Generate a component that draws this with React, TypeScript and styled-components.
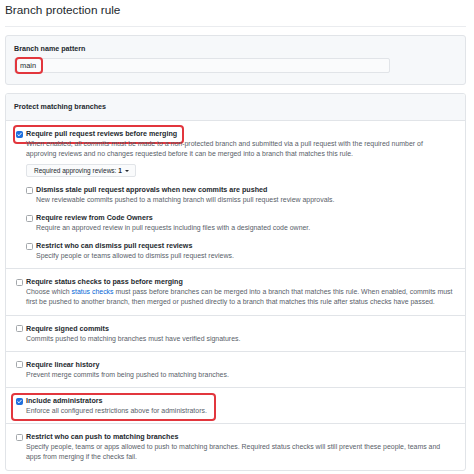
import React from "react";
import styled, { createGlobalStyle } from "styled-components";

const GlobalStyle = createGlobalStyle`
    body {
        margin: 0;
        background: #ffffff;
        font-family: "Liberation Sans", Arial, sans-serif;
        color: #24292e;
    }
`;

const Page = styled.div`
    padding: 0 8px 6px 5px;
`;

const Title = styled.h1`
    margin: 0;
    padding: 3px 0 9px;
    font-size: 11.8px;
    line-height: 14px;
    font-weight: 400;
    color: #24292e;
    border-bottom: 1px solid #eaecef;
`;

const Box = styled.div<{ $muted?: boolean }>`
    margin-top: 8px;
    border: 1px solid #e1e4e8;
    border-radius: 3px;
    background: ${props => (props.$muted ? "#f6f8fa" : "#ffffff")};
    overflow: hidden;
`;

const PatternBody = styled.div`
    padding: 8px 9px 11px 8px;
`;

const FieldLabel = styled.div`
    font-size: 7.15px;
    line-height: 10px;
    font-weight: 700;
`;

const FakeInput = styled.div`
    margin-top: 4px;
    width: 376px;
    height: 15px;
    box-sizing: border-box;
    border: 1px solid #e1e4e8;
    border-radius: 2px;
    background: #fafbfc;
    display: flex;
    align-items: stretch;
    padding: 0 0 0 5px;
    font-size: 7.4px;
    color: #24292e;
`;

const BoxHeader = styled.div`
    background: #f6f8fa;
    padding: 8px 8px;
    border-bottom: 1px solid #e1e4e8;
    font-size: 7.15px;
    line-height: 10px;
    font-weight: 700;
`;

const Section = styled.div`
    padding: 8px 4px 7.3px 10px;

    & + & {
        border-top: 1px solid #e1e4e8;
    }
`;

const Highlight = styled.div<{ $pad: string }>`
    display: flow-root;
    width: fit-content;
    padding: ${props => props.$pad};
    margin: ${props =>
        props.$pad
            .split(" ")
            .map(v => `-${v}`)
            .join(" ")};
    border-radius: 2px;
    box-shadow: 0 0 0 2px #e2363d;
`;

const InputHighlight = styled(Highlight)`
    display: flex;
    align-items: center;
`;

const OptionHead = styled.div`
    display: flex;
    align-items: center;
    gap: 3px;
`;

const Box7 = styled.span<{ $checked?: boolean }>`
    flex: none;
    width: 7px;
    height: 7px;
    box-sizing: border-box;
    border-radius: 1.5px;
    border: 1px solid ${props => (props.$checked ? "#1f6fde" : "#a3a7ab")};
    background: ${props => (props.$checked ? "#1f6fde" : "#ffffff")};
    display: flex;
    align-items: center;
    justify-content: center;
`;

const Label = styled.span`
    font-size: 7.15px;
    line-height: 10px;
    font-weight: 700;
    color: #24292e;
`;

const Desc = styled.div`
    padding-left: 10px;
    font-size: 6.95px;
    line-height: 10px;
    color: #586069;
`;

const Link = styled.span`
    color: #0366d6;
`;

const Dropdown = styled.div`
    margin: 3px 0 0 10px;
    display: inline-flex;
    align-items: center;
    gap: 3px;
    height: 13px;
    box-sizing: border-box;
    padding: 0 6px 0 7px;
    border: 1px solid #e1e4e8;
    border-radius: 2px;
    background: #fafbfc;
    font-size: 6.5px;
    color: #24292e;
    b {
        font-weight: 700;
    }
`;

const Caret = styled.span`
    width: 0;
    height: 0;
    border-left: 2px solid transparent;
    border-right: 2px solid transparent;
    border-top: 2.5px solid #24292e;
`;

const SubOption = styled.div`
    margin: 8px 0 0 10px;
`;

const Checkbox: React.FC<{ checked?: boolean }> = ({ checked }) => (
    <Box7 $checked={checked}>
        {checked && (
            <svg width="5" height="5" viewBox="0 0 10 10">
                <path d="M1.5 5.2 L4 7.6 L8.6 2.4" fill="none" stroke="#fff" strokeWidth="1.9" strokeLinecap="round" strokeLinejoin="round" />
            </svg>
        )}
    </Box7>
);

interface OptionProps {
    label: string;
    checked?: boolean;
    children?: React.ReactNode;
}

const Head: React.FC<{ label: string; checked?: boolean }> = ({ label, checked }) => (
    <OptionHead>
        <Checkbox checked={checked} />
        <Label>{label}</Label>
    </OptionHead>
);

const Option: React.FC<OptionProps> = ({ label, checked, children }) => (
    <>
        <Head label={label} checked={checked} />
        <Desc>{children}</Desc>
    </>
);

export default function App() {
    return (
        <Page>
            <GlobalStyle />
            <Title>Branch protection rule</Title>

            <Box $muted>
                <PatternBody>
                    <FieldLabel>Branch name pattern</FieldLabel>
                    <FakeInput>
                        <InputHighlight $pad="0px 5px 0px 3px">main</InputHighlight>
                    </FakeInput>
                </PatternBody>
            </Box>

            <Box>
                <BoxHeader>Protect matching branches</BoxHeader>

                <Section>
                    <Highlight $pad="2px 5px 3px 1px">
                        <Head label="Require pull request reviews before merging" checked />
                    </Highlight>
                    <Desc>
                        When enabled, all commits must be made to a non-protected branch and submitted via a pull request with the required number of
                        <br />
                        approving reviews and no changes requested before it can be merged into a branch that matches this rule.
                    </Desc>
                    <Dropdown>
                        <span>
                            Required approving reviews: <b>1</b>
                        </span>
                        <Caret />
                    </Dropdown>
                    <SubOption>
                        <Option label="Dismiss stale pull request approvals when new commits are pushed">
                            New reviewable commits pushed to a matching branch will dismiss pull request review approvals.
                        </Option>
                    </SubOption>
                    <SubOption>
                        <Option label="Require review from Code Owners">
                            Require an approved review in pull requests including files with a designated code owner.
                        </Option>
                    </SubOption>
                    <SubOption>
                        <Option label="Restrict who can dismiss pull request reviews">
                            Specify people or teams allowed to dismiss pull request reviews.
                        </Option>
                    </SubOption>
                </Section>

                <Section>
                    <Option label="Require status checks to pass before merging">
                        Choose which <Link>status checks</Link> must pass before branches can be merged into a branch that matches this rule. When enabled, commits must
                        <br />
                        first be pushed to another branch, then merged or pushed directly to a branch that matches this rule after status checks have passed.
                    </Option>
                </Section>

                <Section>
                    <Option label="Require signed commits">Commits pushed to matching branches must have verified signatures.</Option>
                </Section>

                <Section>
                    <Option label="Require linear history">Prevent merge commits from being pushed to matching branches.</Option>
                </Section>

                <Section>
                    <Highlight $pad="1px 7px 3px 3px">
                        <Option label="Include administrators" checked>
                            Enforce all configured restrictions above for administrators.
                        </Option>
                    </Highlight>
                </Section>

                <Section>
                    <Option label="Restrict who can push to matching branches">
                        Specify people, teams or apps allowed to push to matching branches. Required status checks will still prevent these people, teams and
                        <br />
                        apps from merging if the checks fail.
                    </Option>
                </Section>
            </Box>
        </Page>
    );
}
